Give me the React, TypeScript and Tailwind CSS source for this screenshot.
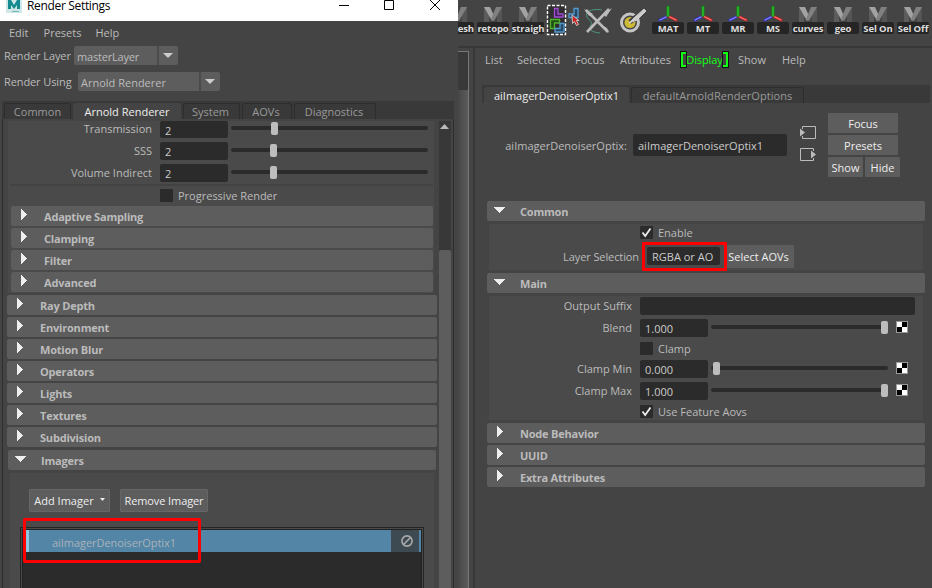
import type { ReactNode } from "react";

const COLLAPSED_INNER = ["Adaptive Sampling", "Clamping", "Filter", "Advanced"];
const COLLAPSED_OUTER = ["Ray Depth", "Environment", "Motion Blur", "Operators", "Lights", "Textures", "Subdivision"];

function Header({ title, open = false, className = "" }: { title: string; open?: boolean; className?: string }) {
  return (
    <div className={`flex h-5 shrink-0 rounded-[2px] bg-[#5d5d5d] ${className}`}>
      <div className="w-[33px] pl-[7px] shrink-0">
        {open ? (
          <svg width="11" height="12" className="block" shapeRendering="crispEdges">
            <path d="M0 6h11l-5.500 6z" fill="#eee" />
          </svg>
        ) : (
          <svg width="12" height="16" className="block" shapeRendering="crispEdges">
            <path d="M3 3v11l6-5.500z" fill="#eee" />
          </svg>
        )}
      </div>
      <span className="pt-[1px] leading-5 text-[11px] font-bold tracking-[-0.2px] text-[#bbb]">{title}</span>
    </div>
  );
}

function Slider({ value, className = "" }: { value: number; className?: string }) {
  return (
    <div className={`h-[13px] shrink-0 pt-1 ${className}`}>
      <div className="relative h-1 w-full rounded-full bg-[#2b2b2b]">
        <div className="absolute -top-1 h-[13px] w-[7px] rounded-[2px] bg-[#bdbdbd]" style={{ left: value }} />
      </div>
    </div>
  );
}

function Field({ children, className = "" }: { children?: ReactNode; className?: string }) {
  return <div className={`shrink-0 rounded-[2px] bg-[#2b2b2b] text-[#ccc] ${className}`}>{children}</div>;
}

function Checkbox({ checked = false }: { checked?: boolean }) {
  return (
    <div className="h-[13px] w-[13px] shrink-0 rounded-[1px] bg-[#2b2b2b]">
      {checked && (
        <svg width="13" height="13" className="block">
          <path d="M2.500 6.500 5.200 10 10.500 2.500" fill="none" stroke="#eee" strokeWidth="1.800" />
        </svg>
      )}
    </div>
  );
}

function Checker() {
  return (
    <svg width="12" height="12" className="ml-2 block shrink-0" shapeRendering="crispEdges">
      <path d="M0 0h12v12H0z" fill="#999" />
      <path d="M1 1h10v10H1z" fill="#fff" />
      <path d="M6 1h5v5H6zM1 6h5v5H1z" fill="#000" />
    </svg>
  );
}

function Combo({ value, className }: { value: string; className: string }) {
  return (
    <div className={`flex h-[19px] rounded-[2px] bg-[#5d5d5d] ${className}`}>
      <span className="grow pl-[3px] pt-px leading-[19px]">{value}</span>
      <div className="w-[21px] border-l-2 border-[#4b4b4b] pl-[4px] pt-[7px]">
        <svg width="10" height="5" className="block">
          <path d="M0 0h10L5 5z" fill="#ccc" />
        </svg>
      </div>
    </div>
  );
}

function Button({ children, className = "" }: { children: ReactNode; className?: string }) {
  return (
    <button className={`flex shrink-0 items-center justify-center rounded-[1px] bg-[#5d5d5d] pt-[2px] text-[#eee] ${className}`}>
      {children}
    </button>
  );
}

function MayaIcon() {
  return (
    <svg width="20" height="18" viewBox="0 0 20 18">
      <path d="M1 2h5v16H1z" fill="#5c5c5c" />
      <path d="M14 2h5v16h-5z" fill="#555" />
      <path d="M1 2h6l5 11-3 3z" fill="#a2a2a2" />
      <path d="M19 2h-6L8 14l3 2z" fill="#808080" />
    </svg>
  );
}

function AxisIcon() {
  return (
    <svg width="20" height="18" viewBox="0 0 20 18" strokeLinecap="round">
      <path d="M10 11 2 15" stroke="#33b" strokeWidth="3" />
      <path d="M10 11 2 15" stroke="#88f" strokeWidth="1.200" />
      <path d="m10 11 8 4" stroke="#b22" strokeWidth="3" />
      <path d="m10 11 8 4" stroke="#f77" strokeWidth="1.200" />
      <path d="M10 10.500V2" stroke="#181" strokeWidth="3" />
      <path d="M10 10.500V2" stroke="#3c3" strokeWidth="1.200" />
    </svg>
  );
}

function ShelfItem({ label, axis = false, clipped = false }: { label: string; axis?: boolean; clipped?: boolean }) {
  return (
    <div className="mr-[3px] flex w-8 shrink-0 flex-col items-center pt-[5px]">
      {axis ? <AxisIcon /> : <MayaIcon />}
      <div
        className={`-mt-px flex h-3 w-full rounded-[2px] bg-[#252525] text-[9.500px] font-bold leading-[13px] tracking-[-0.1px] text-[#ddd] ${
          clipped ? "justify-end" : "justify-center"
        }`}
      >
        <span>{label}</span>
      </div>
    </div>
  );
}

function ShelfTools() {
  return (
    <svg width="105" height="40" className="-ml-px mr-px shrink-0" fill="none">
      <path d="M1.500 5.500h18v29h-18z" fill="#2f2f2f" stroke="#fff" strokeWidth="1.400" strokeDasharray="3 1.500" />
      <path d="M8.500 8.500v8.500h8.500v-3h-5V8.500z" fill="#43205c" stroke="#a04fd0" strokeWidth="1.300" />
      <path d="M4.500 28.500v-9h9v3.500h-5v5.500z" fill="#224f16" stroke="#51b52c" strokeWidth="1.300" />
      <path d="M18 23.500v8.500H9v-3.500h5v-5z" fill="#254865" stroke="#559bd0" strokeWidth="1.300" />
      <path d="M32 8.500v9h-9V14h5V8.500z" fill="#254865" stroke="#559bd0" strokeWidth="1.300" />
      <path d="m26 15 .5 8.500 2-2 2 4 2-1-2-4h2.500z" fill="#c22" stroke="#ddd" strokeWidth=".8" />
      <path d="M56 10c-10-2-18 2-15 7s6 4 4 8-1 7 9 8" stroke="#4b9879" />
      <path d="m40 10 22 22M63 9 41 32" stroke="#bbb" strokeWidth="2.600" />
      <path d="m38 9 9 5-4 2zM63 33l-8-8 6 3zM66 8l-9 6 3 3z" fill="#bbb" />
      <circle cx="84" cy="22.500" r="8.500" stroke="#c5c5c5" strokeWidth="3" />
      <circle cx="84" cy="22.500" r="5.500" fill="#cdbb35" />
      <path d="m84 22 16-13" stroke="#444" strokeWidth="5" />
      <path d="m83 23 5-5 10-9 2 2-9 9z" fill="#ccc" stroke="#ccc" />
    </svg>
  );
}

function RenderSettings() {
  return (
    <div className="flex h-full w-[458px] shrink-0 flex-col bg-[#444]">
      <div className="flex h-[21px] shrink-0 items-start bg-white text-black">
        <svg width="16" height="14" className="ml-[6px] block">
          <path d="M0 0h16v13H0z" fill="#cfe7e7" />
          <path d="M2 0h3l3 5 3-5h3v9h-3V5L8 9 5 5v4H2z" fill="#138b90" />
          <path d="M6 11.500h7" stroke="#71b5b7" />
        </svg>
        <span className="ml-[5px] grow text-[12px] leading-[12px] tracking-[-0.33px]">Render Settings</span>
        <svg width="105" height="14" fill="none" stroke="#000" className="mr-[15px] block">
          <path d="M1 5.500h10M46.500.500h9v9h-9zM92 0l10 10M102 0 92 10" />
        </svg>
      </div>

      <div className="flex h-[25px] shrink-0 gap-[15px] pl-[9px] leading-[23px]">
        <span>Edit</span>
        <span className="-mr-px">Presets</span>
        <span>Help</span>
      </div>
      <div className="flex h-[26px] shrink-0 pl-1">
        <span className="w-[70px] leading-[20px] tracking-[-0.1px]">Render Layer</span>
        <Combo value="masterLayer" className="w-[104px] tracking-[-0.2px]" />
      </div>
      <div className="flex h-[29px] shrink-0 pl-1">
        <span className="w-[74px] leading-[20px] tracking-[-0.1px]">Render Using</span>
        <Combo value="Arnold Renderer" className="w-[142px]" />
      </div>

      {/* Tabs */}
      <div className="ml-[2px] mr-1 flex h-[18px] shrink-0 gap-[2px] bg-[#393939] pl-[2px] pt-[2px] text-center leading-[16px] text-[#999]">
        <div className="w-[67px] rounded-t-[3px] border border-b-0 border-[#2d2d2d]">Common</div>
        <div className="w-[108px] rounded-t-[3px] bg-[#444] pt-px text-[#eee]">Arnold Renderer</div>
        <div className="w-[57px] rounded-t-[3px] border border-b-0 border-[#2d2d2d] pr-[2px]">System</div>
        <div className="w-[50px] rounded-t-[3px] border border-b-0 border-[#2d2d2d] pr-[2px]">AOVs</div>
        <div className="w-[82px] rounded-t-[3px] border border-b-0 border-[#2d2d2d] pr-[2px]">Diagnostics</div>
      </div>

      <div className="ml-[2px] mr-1 flex min-h-0 grow border-x border-[#2d2d2d]">
        <div className="w-[436px] shrink-0 overflow-hidden pt-[2px]">
          <div className="ml-[5px] h-[172px] w-[426px] bg-[#4a4a4a] pl-[3px]">
            <div className="flex h-[21px]">
              <span className="w-[141px] text-right leading-4">Transmission</span>
              <Field className="ml-2 h-[17px] w-[68px] pl-[5px] leading-[19px]">2</Field>
              <Slider value={40} className="ml-[3px] mt-[1px] w-[197px]" />
            </div>
            <div className="flex h-[22px]">
              <span className="w-[141px] text-right leading-[18px]">SSS</span>
              <Field className="ml-2 h-[18px] w-[68px] pl-[5px] leading-[20px]">2</Field>
              <Slider value={39} className="ml-[3px] mt-[2px] w-[197px]" />
            </div>
            <div className="flex h-5">
              <span className="w-[141px] text-right leading-[18px]">Volume Indirect</span>
              <Field className="ml-2 h-[18px] w-[68px] pl-[5px] leading-[20px]">2</Field>
              <Slider value={39} className="ml-[3px] mt-[2px] w-[197px]" />
            </div>
            <div className="h-[2px] w-[422px] bg-[#424242]" />
            <div className="flex h-5 pl-[149px] pt-[3px]">
              <Checkbox />
              <span className="ml-[5px] leading-[14px]">Progressive Render</span>
            </div>
            <div className="flex w-[422px] flex-col gap-[2px]">
              {COLLAPSED_INNER.map((title) => (
                <Header key={title} title={title} />
              ))}
            </div>
          </div>
          <div className="ml-1 mt-[2px] flex w-[430px] flex-col gap-[2px]">
            {COLLAPSED_OUTER.map((title) => (
              <Header key={title} title={title} />
            ))}
          </div>
          <Header title="Imagers" open className="ml-[5px] mt-[3px] w-[428px]" />

          <div className="ml-[7px] mt-[3px] h-[120px] w-[424px] bg-[#4a4a4a] pl-[10px] pt-4">
            <div className="ml-[9px] flex gap-[10px]">
              <Button className="h-[23px] w-[81px] border border-[#666]">
                Add Imager
                <svg width="5" height="3" className="mb-1 ml-[6px]">
                  <path d="M0 0h5L2.500 3z" fill="#eee" />
                </svg>
              </Button>
              <Button className="h-[23px] w-[88px] border border-[#666] tracking-[-0.1px]">Remove Imager</Button>
            </div>
            <div className="mt-[15px] h-20 w-[404px] border border-[#252525] p-px">
              <div className="relative h-full border border-[#222] bg-[#2b2b2b]">
                <div className="ml-[3px] flex h-[22px] w-[395px] bg-[#5285a6]">
                  <div className="w-[3px] bg-[#8ec5df]" />
                  <span className="grow pl-[23px] pt-[2px] leading-[22px] tracking-[-0.05px] text-[#aab2b8]">aiImagerDenoiserOptix1</span>
                  <div className="mr-[2px] w-7 bg-[#3e4a51] pl-[10px] pt-[5px]">
                    <svg width="12" height="12" fill="none" stroke="#aaa" strokeWidth="1.600" className="block">
                      <circle cx="6" cy="6" r="5.100" />
                      <path d="m2.500 9.500 7-7" />
                    </svg>
                  </div>
                </div>
                <div className="absolute left-0 -top-[12px] h-[45px] w-[178px] rounded-[2px] border-[3px] border-[#f00]" />
              </div>
            </div>
          </div>
        </div>

        {/* Scrollbar */}
        <div className="mt-[2px] w-3 shrink-0 bg-[#383838]">
          <div className="h-[129px] pl-px pt-[3px]">
            <svg width="9" height="5" className="block">
              <path d="M4.500 0 9 5H0z" fill="#bbb" />
            </svg>
          </div>
          <div className="h-[400px] rounded-[2px] bg-[#5d5d5d]" />
        </div>
      </div>
    </div>
  );
}

function AttributeEditor() {
  return (
    <div className="flex grow flex-col bg-[#444]">
      <div className="flex h-[37px] shrink-0 pl-[10px] leading-[23px]">
        <span className="w-8">List</span>
        <span className="w-[58px]">Selected</span>
        <span className="w-[45px]">Focus</span>
        <span className="w-[61px]">Attributes</span>
        <div className="mt-[4px] flex h-[15px] w-[47px] justify-between leading-[15px]">
          <div className="w-[5px] shrink-0 border-2 border-r-0 border-[#1f1] outline outline-1 outline-[#111]" />
          <span className="-mx-1 tracking-[-0.1px] text-[#1f1]">Display</span>
          <div className="w-[5px] shrink-0 border-2 border-l-0 border-[#1f1] outline outline-1 outline-[#111]" />
        </div>
        <span className="ml-[10px] w-11">Show</span>
        <span>Help</span>
      </div>

      <div className="ml-[7px] mr-[2px] flex h-[18px] shrink-0 gap-[2px] bg-[#393939] pl-[2px] pt-[2px] text-center leading-[16px] text-[#999]">
        <div className="w-[145px] rounded-t-[3px] bg-[#444] pt-px text-[#eee]">aiImagerDenoiserOptix1</div>
        <div className="w-[173px] rounded-t-[3px] border border-b-0 border-[#2d2d2d] tracking-[0.06px]">defaultArnoldRenderOptions</div>
      </div>

      {/* Node name */}
      <div className="flex h-[98px] shrink-0 pt-[10px]">
        <span className="mt-[22px] w-[152px] text-right leading-[22px]">aiImagerDenoiserOptix:</span>
        <Field className="ml-[6px] mt-[21px] h-[22px] w-[154px] pl-[5px] leading-[24px]">aiImagerDenoiserOptix1</Field>
        <svg width="17" height="40" fill="none" stroke="#bbb" className="ml-[13px] mt-[13px] shrink-0">
          <path d="M2.500 3V.500h13v12h-13V10" />
          <path d="M0 2.500v8L5 6.500z" fill="#bbb" stroke="none" />
          <path d="M13.500 25v-2.500H.500v12h13V32" />
          <path d="M11 24.500v8l5-4z" fill="#bbb" stroke="none" />
        </svg>
        <div className="ml-[11px] flex w-[72px] flex-wrap content-start gap-[2px]">
          <Button className="h-5 w-[70px]">Focus</Button>
          <Button className="h-5 w-[70px]">Presets</Button>
          <Button className="h-5 w-[35px]">Show</Button>
          <Button className="h-5 w-[35px]">Hide</Button>
        </div>
      </div>

      <div className="ml-3 w-[438px]">
        <Header title="Common" open />
        <div className="mb-[3px] ml-[2px] mt-[3px] h-[46px] w-[434px] bg-[#4a4a4a] pt-[2px]">
          <div className="flex h-[19px] pl-[151px]">
            <Checkbox checked />
            <span className="ml-[5px] leading-[14px]">Enable</span>
          </div>
          <div className="flex h-[23px]">
            <span className="w-[150px] text-right leading-[24px] tracking-[-0.1px]">Layer Selection</span>
            <div className="relative ml-2 mt-[2px]">
              <Field className="h-[18px] w-[73px] pl-[5px] leading-[20px]">RGBA or AO</Field>
              <div className="absolute -left-[5px] -top-[5px] h-[29px] w-[85px] rounded-[1px] border-[3px] border-[#f00]" />
            </div>
            <Button className="ml-1 h-[23px] w-[70px] pr-px">Select AOVs</Button>
          </div>
        </div>
        <Header title="Main" open />
        <div className="mb-[3px] ml-[2px] mt-[3px] h-[124px] w-[434px] bg-[#4a4a4a] pt-px">
          <div className="flex h-[22px]">
            <span className="w-[143px] text-right leading-[18px]">Output Suffix</span>
            <Field className="ml-2 h-[18px] w-[275px]" />
          </div>
          <div className="flex h-[23px]">
            <span className="w-[143px] text-right leading-[18px]">Blend</span>
            <Field className="ml-2 h-[18px] w-[68px] pl-[5px] leading-[20px]">1.000</Field>
            <Slider value={170} className="ml-[3px] mt-[2px] w-[177px]" />
            <div className="mt-[2px]"><Checker /></div>
          </div>
          <div className="flex h-[18px] pl-[151px]">
            <Checkbox />
            <span className="ml-[5px] leading-[14px]">Clamp</span>
          </div>
          <div className="flex h-[22px]">
            <span className="w-[143px] text-right leading-[18px]">Clamp Min</span>
            <Field className="ml-2 h-[18px] w-[68px] pl-[5px] leading-[20px]">0.000</Field>
            <Slider value={2} className="ml-[3px] mt-[2px] w-[177px]" />
            <div className="mt-[2px]"><Checker /></div>
          </div>
          <div className="flex h-[23px]">
            <span className="w-[143px] text-right leading-[18px]">Clamp Max</span>
            <Field className="ml-2 h-[18px] w-[68px] pl-[5px] leading-[20px]">1.000</Field>
            <Slider value={170} className="ml-[3px] mt-[2px] w-[177px]" />
            <div className="mt-[2px]"><Checker /></div>
          </div>
          <div className="flex pl-[151px]">
            <Checkbox checked />
            <span className="ml-[5px] leading-[14px]">Use Feature Aovs</span>
          </div>
        </div>
        <div className="flex flex-col gap-[2px]">
          <Header title="Node Behavior" />
          <Header title="UUID" />
          <Header title="Extra Attributes" />
        </div>
      </div>
    </div>
  );
}

export default function App() {
  return (
    <div className="flex h-[588px] w-[932px] cursor-default overflow-hidden whitespace-nowrap bg-[#444] font-['Open_Sans',sans-serif] text-[11px] text-[#bbb]">
      <RenderSettings />
      <div className="flex w-[474px] flex-col">
        <div className="flex h-12 shrink-0 overflow-hidden border-b-2 border-[#383838]">
          <div className="-ml-4 flex">
            <ShelfItem label="esh" clipped />
            <ShelfItem label="retopo" />
            <ShelfItem label="straigh" />
            <ShelfTools />
            <ShelfItem label="MAT" axis />
            <ShelfItem label="MT" axis />
            <ShelfItem label="MR" axis />
            <ShelfItem label="MS" axis />
            <ShelfItem label="curves" />
            <ShelfItem label="geo" />
            <ShelfItem label="Sel On" />
            <ShelfItem label="Sel Off" />
          </div>
        </div>
        <div className="flex min-h-0 grow">
          {/* Edge of the viewport behind the floating window */}
          <div className="mt-[3px] w-[11px] shrink-0 border-r border-t border-[#777] bg-linear-to-r from-[#474747] to-[#5b5b5b]">
            <div className="h-[38px] bg-[#393939]" />
          </div>
          <div className="ml-1 w-[2px] shrink-0 bg-[#383838]" />
          <AttributeEditor />
        </div>
      </div>
    </div>
  );
}
